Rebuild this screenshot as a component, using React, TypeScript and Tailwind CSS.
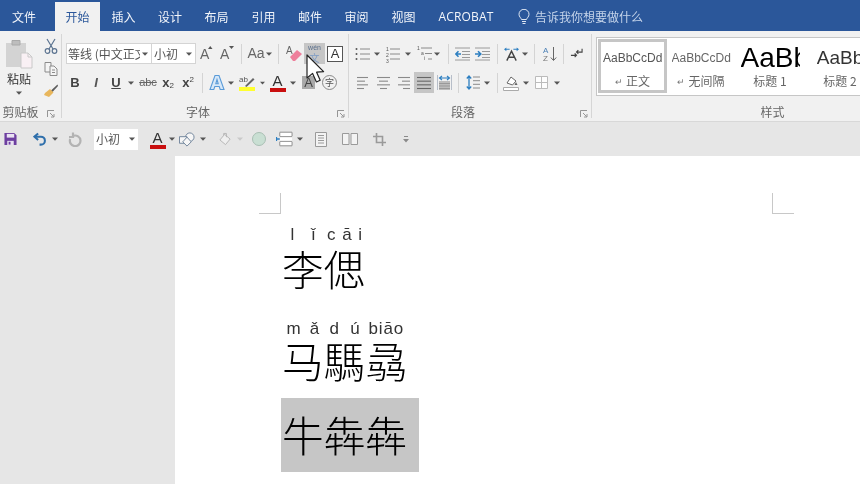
import React from "react";

const cjk = "font-['Noto_Sans_CJK_SC','Noto_Sans',sans-serif]";

function Box({ w, className = "", children }: { w: number; className?: string; children?: React.ReactNode }) {
  return (
    <div className={"flex shrink-0 items-center justify-center h-full " + className} style={{ width: w }}>
      {children}
    </div>
  );
}

function Caret({ w, light = false }: { w: number; light?: boolean }) {
  return (
    <Box w={w}>
      <svg width="6" height="4" viewBox="0 0 6 4">
        <path d="M0 0.5h6L3 3.8z" fill={light ? "#c9c9c9" : "#555"} />
      </svg>
    </Box>
  );
}

function Sep({ w }: { w: number }) {
  return (
    <Box w={w}>
      <div className="h-[20px] w-px bg-[#d4d4d4]" />
    </Box>
  );
}

function Launcher() {
  return (
    <svg width="8" height="8" viewBox="0 0 8 8" fill="none" stroke="#8a8a8a" strokeWidth="0.9">
      <path d="M0.5 7V0.5H7" />
      <path d="M3 3l3.6 3.6M7 4v3H4" />
    </svg>
  );
}

function Lines({ w, rows, stroke = "#8a8a8a" }: { w: number; rows: [number, number][]; stroke?: string }) {
  return (
    <svg width={w} height="14" viewBox={`0 0 ${w} 14`} stroke={stroke} strokeWidth="1.1" fill="none">
      {rows.map(([x1, x2], i) => (
        <path key={i} d={`M${x1} ${1.5 + i * (11 / (rows.length - 1))}H${x2}`} />
      ))}
    </svg>
  );
}

function LetterA({ color = "#444", size = 15, className = "" }: { color?: string; size?: number; className?: string }) {
  return (
    <span className={"font-['Liberation_Sans',sans-serif] leading-none " + className} style={{ color, fontSize: size }}>
      A
    </span>
  );
}

function ColorA({ bar }: { bar: string }) {
  return (
    <div className="flex w-[16px] flex-col items-center">
      <LetterA size={15} color="#333" />
      <div className="h-[4px] w-[16px]" style={{ backgroundColor: bar }} />
    </div>
  );
}

function Bullets() {
  return (
    <svg width="15" height="14" viewBox="0 0 15 14" fill="#555" stroke="#8a8a8a" strokeWidth="1">
      <circle cx="1.5" cy="2" r="1" stroke="none" />
      <circle cx="1.5" cy="7" r="1" stroke="none" />
      <circle cx="1.5" cy="12" r="1" stroke="none" />
      <path d="M5 2h10M5 7h10M5 12h10" />
    </svg>
  );
}

function Numbers() {
  return (
    <div className="relative h-[14px] w-[14px]">
      <div className="absolute left-0 top-[-1px] flex flex-col font-['Liberation_Sans'] text-[5px] leading-[6px] text-[#555]">
        <span>1</span>
        <span>2</span>
        <span>3</span>
      </div>
      <svg className="absolute right-0 top-0" width="10" height="14" viewBox="0 0 10 14" stroke="#8a8a8a" strokeWidth="1">
        <path d="M0 2h10M0 7h10M0 12h10" />
      </svg>
    </div>
  );
}

function Multi() {
  return (
    <div className="relative h-[16px] w-[15px]">
      <div className="absolute left-0 top-0 font-['Liberation_Sans'] text-[5px] leading-[5px] text-[#555]">1</div>
      <div className="absolute left-[4px] top-[5px] font-['Liberation_Sans'] text-[5px] leading-[5px] text-[#555]">a</div>
      <div className="absolute left-[7px] top-[10px] font-['Liberation_Sans'] text-[5px] leading-[5px] text-[#555]">i</div>
      <svg className="absolute left-0 top-0" width="15" height="16" viewBox="0 0 15 16" stroke="#8a8a8a" strokeWidth="1">
        <path d="M4 2h11M8 7.5h7M11 13h4" />
      </svg>
    </div>
  );
}

function Indent({ flip = false }: { flip?: boolean }) {
  return (
    <svg width="15" height="14" viewBox="0 0 15 14" fill="none">
      <path d="M0 1h15M7 4.5h8M7 7.5h8M7 10.5h8M0 13h15" stroke="#9a9a9a" strokeWidth="1" />
      {flip ? (
        <path d="M0 7h5M3 4.2L5.8 7 3 9.8" stroke="#2d7fc1" strokeWidth="1.6" />
      ) : (
        <path d="M6 7H1M3.5 4.2L0.8 7l2.7 2.8" stroke="#2d7fc1" strokeWidth="1.6" />
      )}
    </svg>
  );
}

function GrowA({ down = false }: { down?: boolean }) {
  return (
    <svg width="17" height="18" viewBox="0 0 17 18">
      <text x="1" y="14" fontSize="14" fontFamily="Liberation Sans" fill="#666">
        A
      </text>
      {down ? <path d="M10 1h5L12.500 4z" fill="#555" /> : <path d="M9 4h4.500L11.250 1z" fill="#555" />}
    </svg>
  );
}

function Cursor() {
  return (
    <svg className="absolute left-[306px] top-[54px] z-10" width="19" height="30" viewBox="0 0 19 30">
      <path
        d="M1 1V24L6.600 19.400 10.400 28 14.200 26.300 10.600 18.200 17.600 17.600Z"
        fill="#fff"
        stroke="#222"
        strokeWidth="1.2"
        strokeLinejoin="round"
      />
    </svg>
  );
}

function Group({
  w,
  label,
  launcher = true,
  launchW = 14,
  children,
}: {
  w: number;
  label: string;
  launcher?: boolean;
  launchW?: number;
  children: React.ReactNode;
}) {
  return (
    <div className="relative flex h-[84px] shrink-0 flex-col border-r border-[#d6d6d6]" style={{ width: w }}>
      <div className="flex-1">{children}</div>
      <div className="flex h-[14px] items-center pt-[1px]">
        <span className="flex-1 text-center text-[12px] leading-[14px] text-[#666]">{label}</span>
        {launcher && (
          <span className="flex items-center justify-center pt-[4px]" style={{ width: launchW }}>
            <Launcher />
          </span>
        )}
      </div>
    </div>
  );
}

function Tab({ w, active = false, children }: { w: number; active?: boolean; children: React.ReactNode }) {
  return (
    <div
      className={
        "flex h-[29px] shrink-0 items-center justify-center text-[12px] " +
        (active ? "bg-[#f1f1f1] text-[#2b579a]" : "text-[#f2f5fa]")
      }
      style={{ width: w }}
    >
      {children}
    </div>
  );
}

function StyleCard({
  w,
  sample,
  sampleClass,
  label,
  mark = false,
  selected = false,
}: {
  w: number;
  sample: string;
  sampleClass: string;
  label: string;
  mark?: boolean;
  selected?: boolean;
}) {
  return (
    <div
      className={
        "flex h-[54px] shrink-0 flex-col items-center overflow-hidden " +
        (selected ? "border-[3px] border-[#c6c6c6]" : "border-[3px] border-white")
      }
      style={{ width: w }}
    >
      <div className="flex h-[30px] w-full items-center justify-center overflow-hidden pt-[2px]">
        <span className={"block overflow-hidden whitespace-nowrap font-['Liberation_Sans',sans-serif] " + sampleClass}>
          {sample}
        </span>
      </div>
      <div className="mt-[1px] flex h-[16px] items-center gap-[3px] text-[12px] leading-none text-[#666]">
        {mark && <span className="text-[9px] text-[#777]">↵</span>}
        <span>{label}</span>
      </div>
    </div>
  );
}

function Py({ letters }: { letters: string[] }) {
  return (
    <div className="flex h-[20px] w-[41.7px] items-center justify-around text-[17px] leading-none text-[#333]">
      {letters.map((l, i) => (
        <span key={i}>{l}</span>
      ))}
    </div>
  );
}

export default function App() {
  return (
    <div className={"relative flex h-[484px] w-[860px] flex-col overflow-hidden bg-[#e6e6e6] blur-[0.35px] " + cjk}>
      <Cursor />
      {/* title tabs */}
      <div className="flex h-[31px] shrink-0 items-end bg-[#2b579a]">
        <Tab w={48}>文件</Tab>
        <div className="w-[7px]" />
        <Tab w={45} active>
          开始
        </Tab>
        <Tab w={47}>插入</Tab>
        <Tab w={46}>设计</Tab>
        <Tab w={47}>布局</Tab>
        <Tab w={47}>引用</Tab>
        <Tab w={46}>邮件</Tab>
        <Tab w={47}>审阅</Tab>
        <Tab w={47}>视图</Tab>
        <Tab w={78}>
          <span className="font-['Open_Sans',sans-serif] text-[12px] tracking-[0.2px]">ACROBAT</span>
        </Tab>
        <div className="flex h-[29px] items-center pl-[13px] text-[12px] text-[#c5d4ea]">
          <svg width="12" height="16" viewBox="0 0 12 16" fill="none" stroke="#dfe7f3" strokeWidth="1">
            <path d="M3.500 10.500C3 8.800 1 7.800 1 5.300a5 5 0 0 1 10 0c0 2.500-2 3.500-2.500 5.200Z" />
            <path d="M4 12.500h4M4.500 14.500h3" />
          </svg>
          <span className="ml-[5px]">告诉我你想要做什么</span>
        </div>
      </div>

      {/* ribbon */}
      <div className="flex h-[91px] shrink-0 items-start border-b border-[#d8d8d8] bg-[#f1f1f1] pt-[3px]">
        <Group w={62} label="剪贴板" launchW={20}>
          <div className="flex h-full">
            <div className="flex w-[38px] flex-col items-center pt-[5px]">
              <svg width="28" height="30" viewBox="0 0 28 30">
                <path d="M1 4h20v24H1z" fill="#d3d3d3" />
                <path d="M7 1.500h8V6H7z" fill="#bdbdbd" stroke="#a9a9a9" />
                <path d="M16 14h7l4 4v11H16z" fill="#f9f0f4" stroke="#c9c9c9" />
                <path d="M23 14v4h4" fill="none" stroke="#c9c9c9" />
              </svg>
              <span className="mt-[2px] text-[12px] leading-[16px] text-[#333]">粘贴</span>
              <div className="mt-[4px] flex">
                <svg width="6" height="4" viewBox="0 0 6 4">
                  <path d="M0 0.5h6L3 3.800z" fill="#555" />
                </svg>
              </div>
            </div>
            <div className="flex flex-1 flex-col items-center gap-[8px] pl-[2px] pt-[4px]">
              <svg width="14" height="16" viewBox="0 0 14 16" fill="none" stroke="#5b7390" strokeWidth="1.200">
                <path d="M3 1l6 10M11 1L5 11" />
                <circle cx="3.500" cy="13" r="2.300" />
                <circle cx="10.500" cy="13" r="2.300" />
              </svg>
              <svg width="14" height="14" viewBox="0 0 14 14" fill="#f4f4f4" stroke="#8b8b8b">
                <path d="M1 .5h6V10H1z" />
                <path d="M6 4h4l3 3v6.500H6z" />
                <path d="M8 8h3M8 10.500h3" />
              </svg>
              <svg width="15" height="14" viewBox="0 0 15 14">
                <path d="M14.500 .5L8 6.500l1.500 1.500L15 2z" fill="#5c5c5c" />
                <path d="M7 5l3.500 3.500L6 13 1 11 2 9z" fill="#e8b65c" />
              </svg>
            </div>
          </div>
        </Group>

        <Group w={287} label="字体">
          <div className="mt-[9px] flex h-[21px] pl-[4px]">
            <div className="flex h-[21px] w-[86px] shrink-0 items-center justify-between border border-[#d4d4d4] bg-white pl-[1px] pr-[3px] text-[12px] text-[#555]">
              <span className="w-[72px] overflow-hidden whitespace-nowrap">等线 (中文正文</span>
              <Caret w={7} />
            </div>
            <div className="flex h-[21px] w-[44px] shrink-0 items-center justify-between border-y border-r border-[#d4d4d4] bg-white pl-[2px] pr-[3px] text-[12px] text-[#555]">
              <span>小初</span>
              <Caret w={7} />
            </div>
            <Box w={22}>
              <GrowA />
            </Box>
            <Box w={18}>
              <GrowA down />
            </Box>
            <Sep w={10} />
            <Box w={20} className="font-['Liberation_Sans'] text-[14px] text-[#666]">
              Aa
            </Box>
            <Caret w={6} />
            <Sep w={12} />
            <Box w={20}>
              <svg width="17" height="17" viewBox="0 0 17 17">
                <text x="0" y="9" fontSize="10" fontFamily="Liberation Sans" fill="#666">
                  A
                </text>
                <path d="M4 12l7-7 5 4-7 7H7z" fill="#ee7f9b" />
              </svg>
            </Box>
            <Box w={21} className="relative flex-col bg-[#c6c6c6] leading-none">
              <span className="font-['Liberation_Sans'] text-[7px] leading-[8px] text-[#5a6f8c]">wén</span>
              <span className="text-[10px] leading-[11px] text-[#7e9cc4]">文</span>
            </Box>
            <div className="ml-[2px] flex h-[21px] w-[16px] items-center justify-center">
              <div className="flex h-[16px] w-[16px] items-center justify-center border border-[#555] bg-white">
                <LetterA color="#333" size={13} />
              </div>
            </div>
          </div>
          <div className="mt-[8px] flex h-[21px] pl-[4px] font-['Liberation_Sans'] text-[#444]">
            <Box w={18} className="text-[13px] font-bold">
              B
            </Box>
            <Box w={24} className="text-[13px] font-bold italic text-[#555]">
              I
            </Box>
            <Box w={16} className="text-[13px] font-bold underline">
              U
            </Box>
            <Caret w={14} />
            <Box w={20} className="text-[11px] line-through text-[#666]">
              abc
            </Box>
            <Box w={20} className="text-[13px] font-bold">
              x<span className="mt-[6px] text-[8px] font-normal">2</span>
            </Box>
            <Box w={20} className="text-[13px] font-bold">
              x<span className="mb-[6px] text-[8px] font-normal">2</span>
            </Box>
            <Sep w={8} />
            <Box w={21}>
              <svg width="16" height="17" viewBox="0 0 16 17">
                <path d="M6 1.500h4l5 14h-3.800l-1-3H5.800l-1 3H1zM6.800 9.800h2.400L8 5.500z" fill="#d7e8f8" stroke="#5a9bd8" strokeWidth="1.100" />
              </svg>
            </Box>
            <Caret w={7} />
            <Box w={26} className="flex-col">
              <svg width="16" height="12" viewBox="0 0 16 12">
                <text x="0" y="7" fontSize="8" fontFamily="Liberation Sans" fill="#555">
                  ab
                </text>
                <path d="M6 11l8-8 1.500 1.500-8 7.500z" fill="#666" />
              </svg>
              <div className="h-[4px] w-[16px] bg-[#ffff30]" />
            </Box>
            <Caret w={5} />
            <Box w={25}>
              <ColorA bar="#c90f0f" />
            </Box>
            <Caret w={6} />
            <div className="ml-[6px] flex h-full w-[13px] shrink-0 items-center">
              <div className="flex h-[13px] w-[13px] items-center justify-center bg-[#a9a9a9]">
                <LetterA color="#444" size={13} />
              </div>
            </div>
            <div className="ml-[7px] flex h-full w-[15px] shrink-0 items-center">
              <div className={"flex h-[15px] w-[15px] items-center justify-center rounded-full border border-[#888] text-[9px] leading-none text-[#555] " + cjk}>
                字
              </div>
            </div>
          </div>
        </Group>

        <Group w={243} label="段落">
          <div className="mt-[9px] flex h-[21px] pl-[6px]">
            <Box w={15}>
              <Bullets />
            </Box>
            <Caret w={14} />
            <div className="w-[2px]" />
            <Box w={14}>
              <Numbers />
            </Box>
            <Caret w={16} />
            <div className="w-[1px]" />
            <Box w={15}>
              <Multi />
            </Box>
            <Caret w={10} />
            <Sep w={12} />
            <div className="w-[1px]" />
            <Box w={15}>
              <Indent />
            </Box>
            <div className="w-[5px]" />
            <Box w={15}>
              <Indent flip />
            </Box>
            <Sep w={14} />
            <Box w={15}>
              <svg width="16" height="16" viewBox="0 0 16 16" fill="none">
                <path d="M3 15L8 5l5 10M5 11.500h6" stroke="#444" strokeWidth="1.500" />
                <path d="M0 3l2.500-2v1.500H6v1H2.500V5zM16 3l-2.500-2v1.500H10v1h3.500V5z" fill="#2d7fc1" />
              </svg>
            </Box>
            <Caret w={12} />
            <Sep w={6} />
            <div className="w-[6px]" />
            <Box w={14}>
              <svg width="14" height="16" viewBox="0 0 14 16" fill="none">
                <text x="0" y="7" fontSize="8" fontFamily="Liberation Sans" fill="#4a7fb5">
                  A
                </text>
                <text x="0" y="15" fontSize="8" fontFamily="Liberation Sans" fill="#777">
                  Z
                </text>
                <path d="M10.500 1v13M7.800 11.500l2.700 3 2.700-3" stroke="#666" />
              </svg>
            </Box>
            <Sep w={12} />
            <div className="w-[1px]" />
            <Box w={13}>
              <svg width="14" height="11" viewBox="0 0 14 11" fill="none" stroke="#444" strokeWidth="1.200">
                <path d="M13 .5V4H7M9 2L7 4l2 2" />
                <path d="M1 7.500h6M5 5.500l2 2-2 2" />
              </svg>
            </Box>
          </div>
          <div className="mt-[8px] flex h-[21px] pl-[8px]">
            <Box w={11}>
              <Lines w={11} rows={[[0, 11], [0, 8], [0, 11], [0, 7]]} />
            </Box>
            <div className="w-[9px]" />
            <Box w={13}>
              <Lines w={13} rows={[[0, 13], [2, 11], [0, 13], [3, 10]]} />
            </Box>
            <div className="w-[8px]" />
            <Box w={12}>
              <Lines w={12} rows={[[0, 12], [4, 12], [0, 12], [5, 12]]} />
            </Box>
            <div className="w-[4px]" />
            <Box w={20} className="bg-[#c6c6c6]">
              <Lines w={14} stroke="#666" rows={[[0, 14], [0, 14], [0, 14], [0, 14]]} />
            </Box>
            <div className="w-[3px]" />
            <Box w={15}>
              <svg width="15" height="15" viewBox="0 0 15 15" fill="none">
                <path d="M0 0v15M15 0v15" stroke="#7c8aa0" />
                <path d="M2 6h11v9H2z" fill="#bcbcbc" />
                <path d="M2 8.500h11M2 11h11M2 13.500h11" stroke="#999" />
                <path d="M2.500 3h10M5 1l-2.500 2L5 5M10 1l2.500 2L10 5" stroke="#2d7fc1" strokeWidth="1.100" />
              </svg>
            </Box>
            <Sep w={12} />
            <div className="w-[2px]" />
            <Box w={14}>
              <svg width="14" height="15" viewBox="0 0 14 15" fill="none">
                <path d="M3 1v13M.8 3.500L3 1l2.200 2.500M.8 11.500L3 14l2.200-2.500" stroke="#2d7fc1" strokeWidth="1.300" />
                <path d="M7 2h7M7 5.700h7M7 9.300h7M7 13h7" stroke="#8a8a8a" />
              </svg>
            </Box>
            <Caret w={14} />
            <Sep w={6} />
            <div className="w-[3px]" />
            <Box w={16}>
              <svg width="16" height="17" viewBox="0 0 16 17" fill="none">
                <path d="M4 9l4-6 5 4-3.500 4z" fill="#fff" stroke="#666" />
                <path d="M13 8l1.500 3h-3z" fill="#666" />
                <path d="M.5 13.500h15v3H.5z" fill="#fff" stroke="#aaa" />
              </svg>
            </Box>
            <Caret w={14} />
            <div className="w-[2px]" />
            <Box w={13}>
              <svg width="13" height="13" viewBox="0 0 13 13" fill="#fdfdfd" stroke="#bbb">
                <path d="M.5 .5h12v12H.5zM6.500 .5v12M.5 6.500h12" />
              </svg>
            </Box>
            <Caret w={18} />
          </div>
        </Group>

        <Group w={362} label="样式" launcher={false}>
          <div className="ml-[4px] mt-[3px] flex h-[59px] w-[358px] items-start border border-[#c6c6c6] bg-white pl-[1px] pt-[1px]">
            <StyleCard w={69} selected sample="AaBbCcDd" sampleClass="w-[59px] text-[12px] text-[#555]" label="正文" mark />
            <StyleCard w={68} sample="AaBbCcDd" sampleClass="w-[59px] text-[12px] text-[#666]" label="无间隔" mark />
            <StyleCard w={70} sample="AaBb" sampleClass="w-[59px] text-[28px] leading-[30px] text-black" label="标题 1" />
            <StyleCard w={70} sample="AaBb" sampleClass="text-[19px] leading-[24px] text-[#333]" label="标题 2" />
          </div>
        </Group>
      </div>

      {/* quick access */}
      <div className="flex h-[34px] shrink-0 items-center bg-[#e6e6e6] pl-[4px]">
        <Box w={13}>
          <svg width="14" height="14" viewBox="0 0 14 14">
            <path d="M.5 .5H11L13.500 3v10.500H.5z" fill="#6d3fa0" />
            <path d="M3 1.500h8v4H3z" fill="#e9e2f2" />
            <path d="M3.500 9h7v4.500h-7z" fill="#e9e2f2" />
            <path d="M5 10h2v3H5z" fill="#6d3fa0" />
          </svg>
        </Box>
        <div className="w-[16px]" />
        <Box w={14}>
          <svg width="15" height="14" viewBox="0 0 15 14" fill="none" stroke="#2f6fab" strokeWidth="2.200">
            <path d="M5.500 1L1.500 4.500 5.500 8" />
            <path d="M2 4.500h6.500a4 4 0 0 1 0 8.500H7" />
          </svg>
        </Box>
        <Caret w={16} />
        <div className="w-[5px]" />
        <Box w={14}>
          <svg width="14" height="15" viewBox="0 0 14 15" fill="none" stroke="#b3b3b3" strokeWidth="2.200">
            <path d="M5 .5V5H1" />
            <path d="M5.500 3.800A5.300 5.300 0 1 1 2.200 7" />
          </svg>
        </Box>
        <div className="w-[12px]" />
        <div className="flex h-[21px] w-[44px] shrink-0 items-center justify-between bg-white pl-[2px] pr-[3px] text-[12px] text-[#555]">
          <span>小初</span>
          <Caret w={7} />
        </div>
        <div className="w-[12px]" />
        <Box w={15}>
          <ColorA bar="#c90f0f" />
        </Box>
        <Caret w={14} />
        <Box w={16}>
          <svg width="17" height="15" viewBox="0 0 17 15" fill="#f6f6f6" stroke="#6d8199">
            <circle cx="11.500" cy="5" r="4.500" />
            <path d="M.5 4.500h8v7h-8z" />
            <path d="M8.500 5l4.500 5-4.500 4.500L4 10z" />
          </svg>
        </Box>
        <Caret w={16} />
        <div className="w-[8px]" />
        <Box w={13}>
          <svg width="14" height="15" viewBox="0 0 14 15" fill="#efefef" stroke="#b4b4b4">
            <path d="M1 8l5-6 6 5-5 6z" />
            <path d="M5 3V1h3v4" fill="none" />
          </svg>
        </Box>
        <Caret w={16} light />
        <div className="w-[4px]" />
        <div className="h-[14px] w-[14px] shrink-0 rounded-full border border-[#a9bfb4] bg-[#c9dfd3]" />
        <div className="w-[10px]" />
        <Box w={17}>
          <svg width="18" height="16" viewBox="0 0 18 16" fill="none">
            <path d="M4 1h13v14H4" fill="#fff" />
            <path d="M4 .8h13M4 5.500h13M4 10.500h13M4 15.200h13M4 1v4M17 1v4M4 11v4M17 11v4" stroke="#8a8a8a" />
            <path d="M.5 6v4M1 8h3" stroke="#2d7fc1" strokeWidth="1.400" />
          </svg>
        </Box>
        <Caret w={14} />
        <div className="w-[8px]" />
        <Box w={12}>
          <svg width="12" height="15" viewBox="0 0 12 15" fill="#f3f3f3" stroke="#9a9a9a">
            <path d="M.5 .5h11v14H.5z" />
            <path d="M3 3.500h6M3 6h6M3 8.500h6M3 11h6" fill="none" />
          </svg>
        </Box>
        <div className="w-[15px]" />
        <Box w={16}>
          <svg width="16" height="12" viewBox="0 0 16 12" fill="#f3f3f3" stroke="#9a9a9a">
            <path d="M.5 .5h6.500v11H.5zM9 .5h6.500v11H9z" />
          </svg>
        </Box>
        <div className="w-[15px]" />
        <Box w={13}>
          <svg width="13" height="13" viewBox="0 0 13 13" fill="none" stroke="#9a9a9a" strokeWidth="1.600">
            <path d="M3.500 0v9.500H13M0 3.500h9.500V13" />
          </svg>
        </Box>
        <div className="w-[16px]" />
        <Box w={8}>
          <svg width="6" height="7" viewBox="0 0 6 7" fill="#8a8a8a">
            <path d="M1 0h4v1H1zM0 3h6L3 6.500z" />
          </svg>
        </Box>
      </div>

      {/* document */}
      <div className="flex flex-1">
        <div className="w-[175px] shrink-0 bg-[#e6e6e6]" />
        <div className="flex-1 bg-white pt-[37px]">
          <div className="flex justify-between pl-[84px] pr-[66px]">
            <div className="h-[21px] w-[22px] border-b border-r border-[#c8c8c8]" />
            <div className="h-[21px] w-[22px] border-b border-l border-[#c8c8c8]" />
          </div>
          <div className="pl-[106px] pt-[10px] text-black">
            <div className="pl-[1px] font-['Liberation_Sans',sans-serif]">
              <div className="flex">
                <Py letters={["l", "ǐ"]} />
                <Py letters={["c", "ā", "i"]} />
              </div>
            </div>
            <div className="mt-[3px] flex h-[44px] items-center pl-[1px] text-[41.7px] font-light leading-none">李偲</div>
            <div className="mt-[27px] pl-[1px] font-['Liberation_Sans',sans-serif]">
              <div className="flex">
                <Py letters={["m", "ǎ"]} />
                <Py letters={["d", "ú"]} />
                <div className="flex h-[20px] w-[41.7px] items-center justify-center text-[17px] leading-none tracking-[0.8px] text-[#333]">
                  biāo
                </div>
              </div>
            </div>
            <div className="mt-[1px] flex h-[44px] items-center pl-[1px] text-[41.7px] font-light leading-none">马騳骉</div>
            <div className="mt-[15px] flex h-[74px] w-[138px] items-center bg-[#c6c6c6] pl-[1px] text-[41.7px] font-light leading-none">
              牛犇犇
            </div>
          </div>
        </div>
      </div>
    </div>
  );
}
